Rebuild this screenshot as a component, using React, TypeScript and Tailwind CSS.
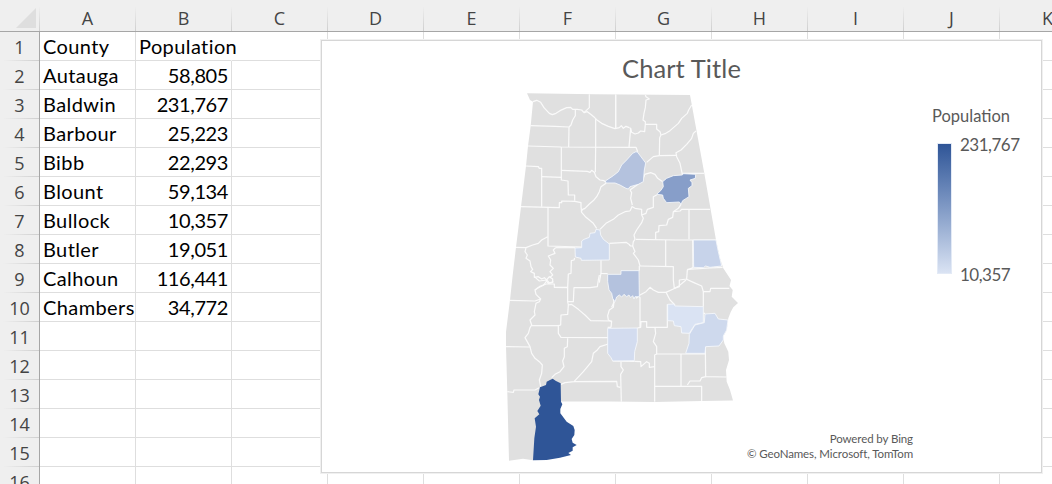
import React from "react";

const columns = ["A", "B", "C", "D", "E", "F", "G", "H", "I", "J", "K"];

const rows = [
  ["County", "Population"],
  ["Autauga", "58,805"],
  ["Baldwin", "231,767"],
  ["Barbour", "25,223"],
  ["Bibb", "22,293"],
  ["Blount", "59,134"],
  ["Bullock", "10,357"],
  ["Butler", "19,051"],
  ["Calhoun", "116,441"],
  ["Chambers", "34,772"],
  ["", ""],
  ["", ""],
  ["", ""],
  ["", ""],
  ["", ""],
  ["", ""],
];

const stateOutline =
  "527,93.3 595,94.3 690,95 704.3,173.3 716,240 720,258.3 723.3,268.3 731,280 729.5,286 732.7,290 731.7,296.7 733,298 738,303 733.3,307.3 730.7,312 728.3,318.3 726.7,330 723.3,336.7 724.3,343.3 728.3,351.7 729,360 726,370 726.7,381.7 730,390 733,400.5 701.7,401 655,402 610,401.5 561,401.5 550,430 533,460.3 523,458.7 509,460.7 507.3,391.7 506,346.7 506,331.7 510,300 512.7,275 516,247.3 521,206.7 526,166 528,146 530.7,125.7 533,101.7 530,100";

// County borders, grouped by map section. Units are a third of a map unit.
const sections = [
  {
    x: 500,
    y: 85,
    lines: [
      "99,50 110,46 122,52 132,68 148,85 157,89 168,85 180,77 200,68 212,67 218,73 232,73 245,75 252,83 268,68 268,28",
      "252,83 262,80 272,88 283,97 290,104 305,115 325,124 345,131 358,128 364,122 370,130 378,124 388,128",
      "92,122 165,124 206,126",
      "226,75 226,92 218,105 213,120 207,126 206,186",
      "84,183 184,186 390,187",
      "287,101 287,187 286,262",
      "347,28 347,130",
      "78,243 115,245 118,250 125,250 125,365",
      "125,275 184,277",
      "184,186 184,285 204,288 205,330 224,330 224,347",
      "184,256 262,259 270,262 275,256 283,262 288,275 300,285 312,287 320,293",
    ],
  },
  {
    x: 610,
    y: 85,
    lines: [
      "58,128 62,130 65,142 75,147 85,144 92,138 104,140 106,118 106,110 99,105 102,85 106,68 108,45 118,42 108,35 106,30",
      "106,118 140,118 140,132 150,140 153,150",
      "245,60 236,75 232,85 215,100 205,115 180,137 165,146 153,150 149,158 148,212",
      "62,130 57,187",
      "17,30 17,128",
      "57,187 78,187 83,200",
      "258,138 250,145 245,160 230,178 213,195 198,203 200,215 210,235 217,268",
      "148,212 198,211",
      "148,212 130,215 110,232",
      "104,268 122,263 135,268 143,280 158,290",
      "217,265 282,265",
    ],
  },
  {
    x: 500,
    y: 180,
    lines: [
      "63,80 178,83 178,68 185,68 185,63 225,64 243,68 243,80 245,97 258,112 280,130 290,145",
      "243,95 248,88 255,85 268,72 282,60 290,50 298,35 303,20 318,10",
      "300,148 318,130 340,118 355,105 375,95 390,93",
      "144,83 144,198 245,201",
      "48,202 78,203",
      "143,170 125,180 115,190 98,195 78,203 75,215 82,225 78,235 90,243 93,260 98,268 92,275 103,280 103,292 115,290 125,297 133,293 140,300 148,290 158,297 158,307 145,310 138,302",
      "167,203 160,210 165,220 145,228 152,240 150,255 160,265 150,275 158,285 150,292",
      "167,203 225,203",
      "224,234 222,240 214,242 213,280 205,282 203,322 163,322",
      "303,241 303,280 323,281",
      "303,280 300,295 298,308",
      "328,190 378,187 390,195",
      "140,303 130,316 112,325 105,330",
    ],
  },
  {
    x: 610,
    y: 180,
    lines: [
      "60,30 65,38 62,55 67,75",
      "60,93 67,78",
      "67,80 75,85 95,88 95,105 100,115 95,128 80,150 72,165 75,178 70,185 68,198 75,215 70,220 85,240 90,258",
      "95,105 108,100 112,88 130,82 130,65 130,50 140,45",
      "60,30 85,12 93,3 102,-10 104,-17",
      "58,195 62,198 70,198",
      "78,178 200,180 318,180",
      "137,178 137,157 146,155 147,137 170,135 175,118 188,112 190,95 205,85 213,73",
      "190,95 210,93 215,88 300,88",
      "237,88 237,178",
      "167,180 167,258",
      "248,180 249,263 232,270 230,297 208,300 208,320 193,325",
      "232,268 300,264 338,262",
      "90,258 190,260 190,300 193,325",
      "88,258 88,272",
    ],
  },
  {
    x: 500,
    y: 275,
    lines: [
      "30,76 105,78 122,72",
      "138,27 118,35 105,45 108,58 122,72 118,80 108,85 103,110 105,120 90,135 95,150 90,158 85,175 75,188 90,215 95,235 105,250 120,262 127,270 125,295 118,315 122,335",
      "103,5 118,18 140,15 148,24 160,20",
      "138,27 163,27 163,37 203,38",
      "203,37 203,80 220,80 222,38 270,38 292,35 295,15 298,0",
      "203,80 205,90 214,88 235,103 255,120 272,137 335,138 333,157",
      "205,90 203,118 183,120 182,150 175,152 175,175 183,187 325,188",
      "95,152 175,152",
      "18,215 90,216",
      "203,190 202,215 193,220 193,245 188,258 192,275 180,290 165,298 155,308",
      "325,207 300,215 292,225 280,235 275,260 250,290 222,320 195,323 183,328",
      "222,320 350,319 352,335 361,337",
      "335,140 325,135 323,122 328,105 340,97 342,80",
      "22,350 40,352 42,345 105,345 118,338",
      "363,260 363,275 370,285 362,298 364,380",
      "323,157 333,157",
    ],
  },
  {
    x: 610,
    y: 275,
    lines: [
      "88,65 90,68 90,155 92,157 93,140 110,140 110,157 172,157 172,88",
      "78,70 90,60 108,50 120,37 130,45 145,52 168,52 180,75 195,90",
      "168,52 190,42 208,32 228,15",
      "228,12 250,22 275,33 280,50 300,50 302,40 358,40",
      "280,50 280,95",
      "280,115 285,115",
      "10,72 12,82 5,97",
      "82,159 92,157",
      "135,157 137,175 130,200 140,215 140,237 227,237 286,237",
      "140,237 134,240 134,380",
      "213,237 213,333",
      "286,215 287,305 350,306",
      "287,305 275,308 270,318 240,318 232,330",
      "134,334 275,334 275,378",
      "73,259 92,260 93,275 110,260 118,265 118,277 134,275",
      "8,258 73,259",
    ],
  },
];

const counties = [
  {
    name: "Blount",
    x: 610,
    y: 85,
    fill: "#b4c2de",
    points:
      "78,200 83,202 107,234 103,255 100,290 85,298 60,305 55,312 48,310 30,300 15,294 -12,294 -14,288 10,272 25,260 35,240 50,225 68,205",
  },
  {
    name: "Calhoun",
    x: 610,
    y: 85,
    fill: "#879ec9",
    points:
      "158,290 170,280 190,272 217,270 220,266 257,268 256,280 240,285 246,293 246,302 235,310 237,335 218,347 213,358 208,351 170,353 160,340 158,330 140,328 152,317 160,305",
  },
  {
    name: "Bibb",
    x: 500,
    y: 180,
    fill: "#d0dbee",
    points:
      "225,204 245,203 245,183 252,178 268,172 270,160 285,158 288,148 300,150 302,165 310,178 328,192 328,240 244,241 243,235 226,231",
  },
  {
    name: "Chambers",
    x: 610,
    y: 180,
    fill: "#c7d3ea",
    points: "250,180 318,180 325,215 332,245 335,258 300,262 287,258 280,263 251,262",
  },
  {
    name: "Autauga",
    x: 610,
    y: 275,
    fill: "#b4c2de",
    points:
      "-7,-2 33,-2 33,-13 87,-13 88,65 75,65 72,72 68,62 62,68 57,60 50,65 42,58 35,66 28,60 20,66 15,80 8,70 5,55 -3,45 -7,20",
  },
  {
    name: "Butler",
    x: 610,
    y: 275,
    fill: "#d3dcef",
    points: "-7,160 82,159 82,200 74,230 73,257 8,258 3,248 -7,235",
  },
  {
    name: "Bullock",
    x: 610,
    y: 275,
    fill: "#dae3f3",
    points:
      "173,88 192,87 195,93 280,95 280,143 255,148 238,175 215,174 213,155 193,152 190,138 173,137",
  },
  {
    name: "Barbour",
    x: 610,
    y: 275,
    fill: "#ced9ed",
    points:
      "285,117 315,115 325,132 354,135 350,165 340,183 340,195 327,213 287,215 285,235 227,235 237,205 238,178 255,150 283,143",
  },
  {
    name: "Baldwin",
    x: 500,
    y: 365,
    fill: "#2f5597",
    points:
      "120,67 138,60 140,50 150,45 158,41 168,48 182,55 183,110 187,118 181,132 181,145 200,170 220,183 224,195 223,210 215,222 218,233 230,240 218,247 218,257 205,264 213,270 180,278 140,285 99,286 103,220 108,185 104,160 118,148 112,138 122,122 117,105 120,95 115,88",
  },
];

const AlabamaMap = () => (
  <svg width="250" height="380" viewBox="500 85 250 380" className="block">
    <polygon points={stateOutline} fill="#e0e0e0" />
    {sections.map((section, index) => (
      <g
        key={index}
        transform={`translate(${section.x} ${section.y}) scale(0.33333)`}
        fill="none"
        stroke="#fafafa"
        strokeWidth="3.6"
        strokeLinejoin="round"
      >
        {section.lines.map((line) => (
          <polyline key={line} points={line} />
        ))}
      </g>
    ))}
    {counties.map((county) => (
      <polygon
        key={county.name}
        points={county.points}
        transform={`translate(${county.x} ${county.y}) scale(0.33333)`}
        fill={county.fill}
        stroke={county.name === "Baldwin" ? "none" : "#f7f9fd"}
        strokeWidth="2.5"
      />
    ))}
  </svg>
);

const ChartCard = () => (
  <div className="absolute left-[321px] top-[40px] flex h-[433px] w-[721px] flex-col border border-[#d6d6d6] bg-white font-[Lato,sans-serif] text-[#595959] shadow-[0_0_0_1px_#f0f0f0]">
    <h1 className="ml-[300px] mt-[11px] h-[33px] text-[25.5px] leading-[33px] tracking-[0.1px]">
      Chart Title
    </h1>
    <div className="flex">
      <div className="ml-[178px] h-[380px] w-[250px]">
        <AlabamaMap />
      </div>
      <div className="ml-[182px] pt-[21px]">
        <div className="text-[16.5px] leading-[20px]">Population</div>
        <div className="ml-[5px] mt-[17px] flex gap-[8px]">
          <div className="h-[131px] w-[15px] border border-[#e3eaf6] bg-linear-to-b from-[#2f5597] to-[#dae3f3]" />
          <div className="-mb-[11px] -mt-[8px] flex flex-col justify-between text-[17px] leading-[20px] tracking-[-0.5px]">
            <span>231,767</span>
            <span>10,357</span>
          </div>
        </div>
      </div>
    </div>
    <div className="-mt-[34px] pr-[128px] text-right text-[11.5px] leading-[15px] tracking-[-0.1px]">
      <p>Powered by Bing</p>
      <p>© GeoNames, Microsoft, TomTom</p>
    </div>
  </div>
);

export default function App() {
  return (
    <div className="relative h-[484px] w-[1052px] overflow-hidden bg-white">
      <div className="flex h-[32px] w-[1100px] border-b border-[#a6a6a6] bg-[#efefef] font-['Open_Sans',sans-serif] text-[18px] text-[#444]">
        <div className="flex w-[40px] shrink-0 items-start justify-end pr-[4px] pt-[8px]">
          <svg width="20" height="20">
            <path d="M20 0V20H0Z" fill="#dedede" />
          </svg>
        </div>
        {columns.map((column) => (
          <div key={column} className="relative w-[96px] shrink-0 pr-px pt-[6px] text-center leading-[25px]">
            {column}
            <div className="absolute -left-px bottom-0 h-[25px] w-px bg-linear-to-b from-[#efefef] to-[#cfcfcf]" />
            <div className="absolute right-0 bottom-0 h-[25px] w-px bg-linear-to-b from-[#efefef] to-[#cfcfcf]" />
          </div>
        ))}
      </div>
      {rows.map(([county, population], rowIndex) => (
        <div key={rowIndex} className="flex h-[29px] w-[1100px]">
          <div className="relative w-[40px] shrink-0 border-r border-[#a6a6a6] bg-[#efefef] text-center font-['Open_Sans',sans-serif] text-[18px] leading-[30px] text-[#444]">
            {rowIndex + 1}
            <div className="absolute bottom-0 right-0 h-px w-[36px] bg-linear-to-r from-[#efefef] to-[#cfcfcf]" />
          </div>
          {columns.map((column, index) => (
            <div
              key={column}
              className={`w-[96px] shrink-0 whitespace-nowrap border-b border-r border-[#dedede] px-[3px] font-[Lato,sans-serif] text-[20px] leading-[29px] text-black ${
                index === 1 && rowIndex === 0 ? "border-r-white" : ""
              } ${index === 1 && rowIndex > 0 ? "text-right tracking-[-0.4px]" : "tracking-[0.4px]"}`}
            >
              {index === 0 && county}
              {index === 1 && population}
            </div>
          ))}
        </div>
      ))}
      <ChartCard />
    </div>
  );
}
